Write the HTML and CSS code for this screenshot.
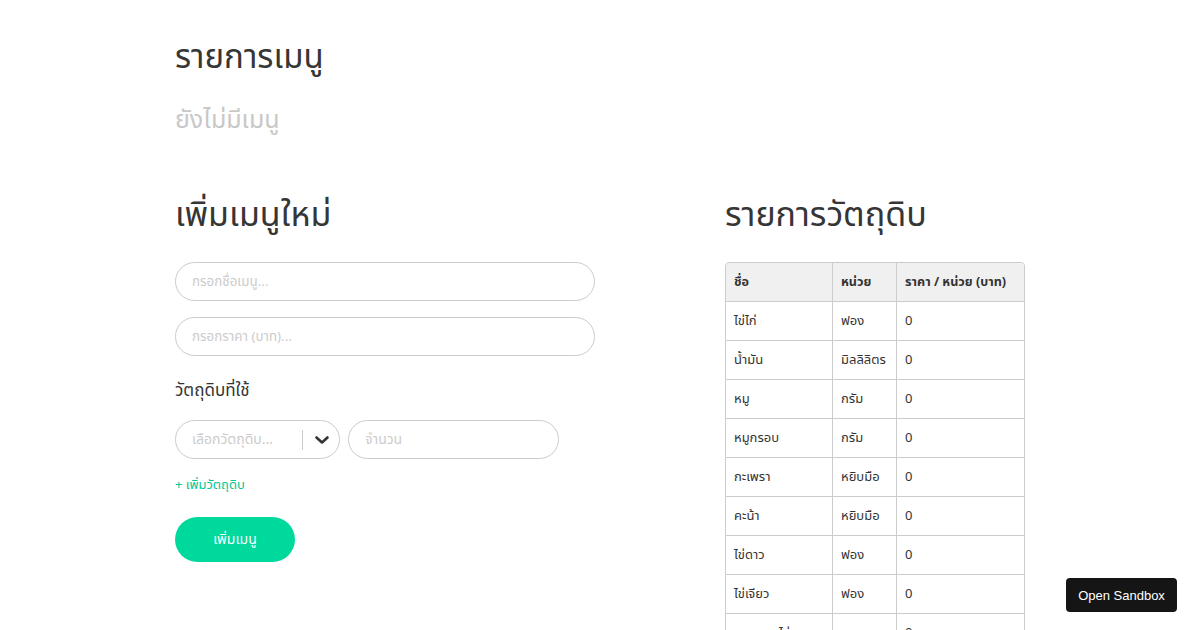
FILE: index.html
```html
<!DOCTYPE html>
<html lang="th">
<head>
<meta charset="utf-8">
<title>รายการเมนู</title>
<link rel="stylesheet" href="styles.css">
</head>
<body>
<div class="page">
  <section class="menu-list">
    <h1 class="title">รายการเมนู</h1>
    <p class="empty">ยังไม่มีเมนู</p>
  </section>
  <div class="columns">
    <section class="form-col">
      <h2 class="heading">เพิ่มเมนูใหม่</h2>
      <input class="field" type="text" placeholder="กรอกชื่อเมนู...">
      <input class="field" type="text" placeholder="กรอกราคา (บาท)...">
      <h3 class="subheading">วัตถุดิบที่ใช้</h3>
      <div class="ing-row">
        <div class="select">
          <span class="select-ph">เลือกวัตถุดิบ...</span>
          <span class="select-sep"></span>
          <svg class="chev" width="20" height="20" viewBox="0 0 20 20"><path d="M4.5 7.5 L10 12.5 L15.5 7.5" fill="none" stroke="#333" stroke-width="2.6" stroke-linecap="round" stroke-linejoin="round"/></svg>
        </div>
        <input class="qty" type="text" placeholder="จำนวน">
      </div>
      <a class="add-ing" href="#">+ เพิ่มวัตถุดิบ</a>
      <button class="submit" type="button">เพิ่มเมนู</button>
    </section>
    <section class="table-col">
      <h2 class="heading">รายการวัตถุดิบ</h2>
      <table class="ing-table">
        <thead>
          <tr><th>ชื่อ</th><th>หน่วย</th><th>ราคา / หน่วย (บาท)</th></tr>
        </thead>
        <tbody>
          <tr><td>ไข่ไก่</td><td>ฟอง</td><td>0</td></tr>
          <tr><td>น้ำมัน</td><td>มิลลิลิตร</td><td>0</td></tr>
          <tr><td>หมู</td><td>กรัม</td><td>0</td></tr>
          <tr><td>หมูกรอบ</td><td>กรัม</td><td>0</td></tr>
          <tr><td>กะเพรา</td><td>หยิบมือ</td><td>0</td></tr>
          <tr><td>คะน้า</td><td>หยิบมือ</td><td>0</td></tr>
          <tr><td>ไข่ดาว</td><td>ฟอง</td><td>0</td></tr>
          <tr><td>ไข่เจียว</td><td>ฟอง</td><td>0</td></tr>
          <tr><td>หมูกรอบไข่ดาว</td><td>จาน</td><td>0</td></tr>
        </tbody>
      </table>
    </section>
  </div>
</div>
<a class="sandbox" href="#">Open Sandbox</a>
</body>
</html>
```
FILE: styles.css
```css
* { box-sizing: border-box; }
html, body { margin: 0; padding: 0; background: #fff; }
body {
  font-family: "Noto Sans Thai", "Noto Sans Thai Looped", "Noto Sans", "Noto Sans CJK SC", sans-serif;
  color: #333;
  overflow: hidden;
  height: 630px;
}
.page {
  width: 850px;
  margin: 0 auto;
  padding-top: 31px;
}
.title {
  margin: 0;
  font-size: 33px;
  font-weight: 400;
  line-height: 54px;
  color: #363636;
}
.empty {
  margin: 15px 0 0;
  font-size: 25px;
  line-height: 40px;
  color: #c8c8c8;
}
.columns {
  display: flex;
  justify-content: space-between;
  margin-top: 50px;
}
.form-col { width: 420px; display: flex; flex-direction: column; align-items: flex-start; }
.table-col { width: 300px; }
.heading {
  margin: 0 0 20px;
  font-size: 34px;
  font-weight: 400;
  line-height: 52px;
  color: #363636;
}
.field {
  width: 420px;
  height: 39px;
  border: 1px solid #ccc;
  border-radius: 20px;
  padding: 0 16px;
  font: inherit;
  font-size: 13.4px;
  margin-bottom: 16px;
  outline: none;
}
.field::placeholder, .qty::placeholder { color: #ccc; }
.subheading {
  margin: 4px 0 14px;
  font-size: 17px;
  font-weight: 400;
  line-height: 30px;
}
.ing-row { display: flex; gap: 8px; }
.select {
  width: 165px;
  height: 39px;
  border: 1px solid #ccc;
  border-radius: 20px;
  display: flex;
  align-items: center;
  padding-left: 16px;
}
.select-ph { font-size: 14px; color: #ccc; width: 110px; white-space: nowrap; }
.select-sep { width: 1px; height: 20px; background: #ccc; }
.chev { margin-left: 9px; }
.qty {
  width: 211px;
  height: 39px;
  border: 1px solid #ccc;
  border-radius: 20px;
  padding: 0 16px;
  font: inherit;
  font-size: 14px;
  outline: none;
}
.add-ing {
  margin-top: 16px;
  font-size: 13px;
  color: #00c896;
  text-decoration: none;
  line-height: 20px;
}
.submit {
  margin-top: 22px;
  width: 120px;
  height: 45px;
  border: none;
  border-radius: 23px;
  background: #00d99c;
  color: #fff;
  font: inherit;
  font-size: 14px;
}
.ing-table {
  width: 300px;
  border-collapse: separate;
  border-spacing: 0;
  border: 1px solid #ccc;
  border-radius: 4px;
  font-size: 13px;
}
.ing-table th, .ing-table td {
  text-align: left;
  padding: 0 8px;
  height: 39px;
  border-right: 1px solid #ccc;
  border-bottom: 1px solid #ccc;
}
.ing-table th:last-child, .ing-table td:last-child { border-right: none; }
.ing-table th { background: #f0f0f0; font-weight: 700; font-size: 12.6px; }
.ing-table th:first-child { border-top-left-radius: 4px; }
.ing-table th:last-child { border-top-right-radius: 4px; }
.ing-table th:nth-child(1) { width: 107px; }
.ing-table th:nth-child(2) { width: 64px; }
.sandbox {
  position: fixed;
  right: 23px;
  bottom: 18px;
  width: 111px;
  height: 34px;
  background: #151515;
  color: #fff;
  border-radius: 4px;
  font-family: "Liberation Sans", Arial, sans-serif;
  font-size: 13px;
  display: flex;
  align-items: center;
  justify-content: center;
  text-decoration: none;
}
```
